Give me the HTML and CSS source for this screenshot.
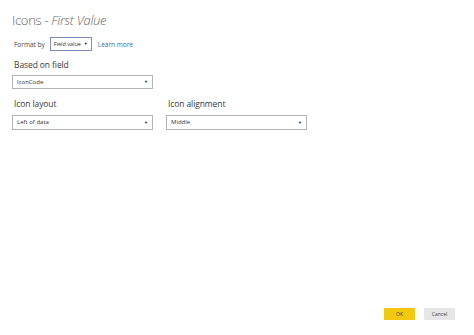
FILE: index.html
```html
<!DOCTYPE html>
<html lang="en">
<head>
  <meta charset="UTF-8" />
  <meta name="viewport" content="width=device-width, initial-scale=1.0" />
  <title>Icons - First Value</title>
  <link rel="stylesheet" href="styles.css">
</head>
<body>
  <div class="dialog">
    <h1 class="title">Icons - <em>First Value</em></h1>

    <div class="format-row">
      <span class="small-label">Format by</span>
      <div class="select select-format">Field value <span class="caret">&#9660;</span></div>
      <a class="learn" href="#">Learn more</a>
    </div>

    <label class="field-label">Based on field</label>
    <div class="select">IconCode <span class="caret">&#9660;</span></div>

    <div class="two-col">
      <div class="col">
        <label class="field-label">Icon layout</label>
        <div class="select">Left of data <span class="caret">&#9660;</span></div>
      </div>
      <div class="col">
        <label class="field-label">Icon alignment</label>
        <div class="select">Middle <span class="caret">&#9660;</span></div>
      </div>
    </div>

    <div class="footer">
      <button class="btn btn-ok">OK</button>
      <button class="btn btn-cancel">Cancel</button>
    </div>
  </div>
</body>
</html>
```

FILE: styles.css
```css
body {
  margin: 0;
  font-family: "Open Sans", "Noto Sans", sans-serif;
  background: white;
  color: #333;
}

.dialog {
  height: 335px;
  box-sizing: border-box;
  padding: 11px 12px 0 12px;
  display: flex;
  flex-direction: column;
}

.title {
  margin: 0;
  font-size: 13px;
  font-weight: 300;
  color: #666;
  line-height: 18px;
  letter-spacing: -0.3px;
}

.title em {
  font-style: italic;
}

.format-row {
  display: flex;
  align-items: center;
  margin-top: 8px;
  padding-left: 2px;
}

.small-label {
  font-size: 6.5px;
  color: #444;
  margin-right: 5px;
}

.select {
  position: relative;
  width: 141px;
  height: 14px;
  box-sizing: border-box;
  border: 1px solid #b3b3b3;
  font-size: 6px;
  line-height: 12px;
  padding-left: 4px;
  color: #333;
}

.select-format {
  width: 42px;
  border-color: #7a8fb8;
  padding-left: 3px;
  font-size: 5.5px;
}

.caret {
  position: absolute;
  right: 4px;
  top: 0;
  font-size: 4px;
  color: #222;
}

.select-format .caret {
  right: 3px;
}

.learn {
  font-size: 6.5px;
  color: #2f6eb5;
  text-decoration: none;
  margin-left: 6px;
}

.field-label {
  display: block;
  font-size: 8.5px;
  color: #3a3a3a;
  margin: 8px 0 5px 2px;
  letter-spacing: -0.1px;
}

.two-col {
  display: flex;
  gap: 13px;
  margin-top: 1px;
}

.two-col .field-label {
  margin-bottom: 6px;
}

.two-col .select {
  height: 15px;
  line-height: 13px;
}

.footer {
  margin-top: auto;
  margin-bottom: 15px;
  display: flex;
  justify-content: flex-end;
  gap: 9px;
  padding-right: 7px;
}

.btn {
  width: 31px;
  height: 12px;
  border: none;
  font-family: inherit;
  font-size: 5px;
  padding: 0;
  color: #444;
}

.btn-ok {
  background: #f2c811;
}

.btn-cancel {
  background: #e6e6e6;
}
```
